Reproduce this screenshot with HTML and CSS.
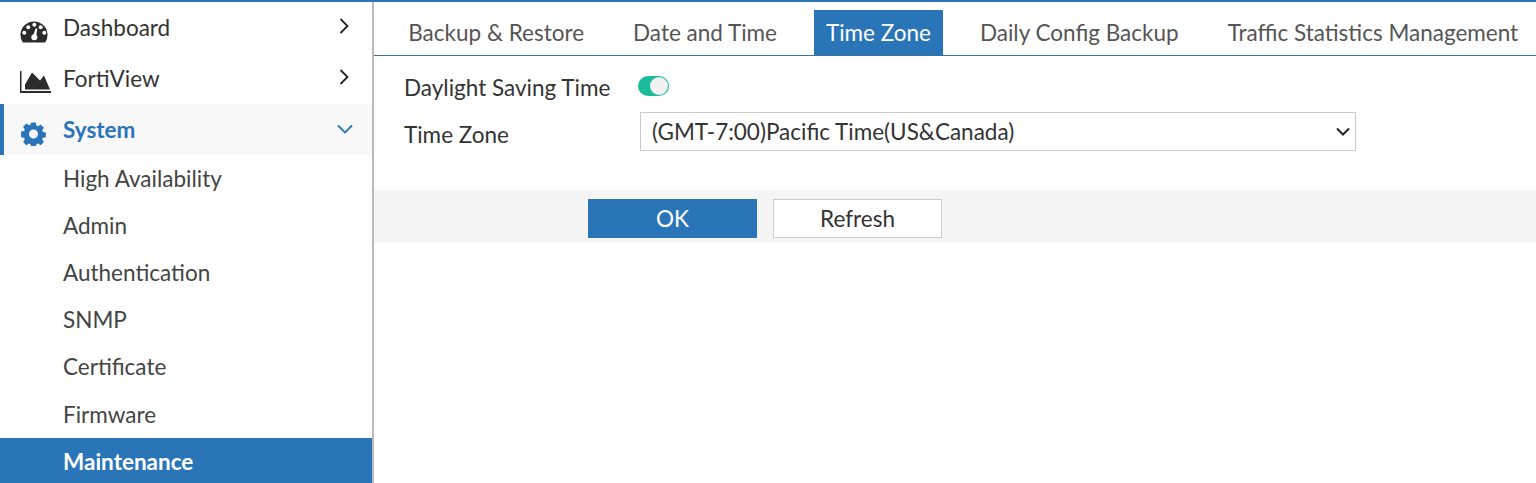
FILE: index.html
```html
<!DOCTYPE html>
<html lang="en">
<head>
  <meta charset="UTF-8">
  <title>Maintenance</title>
  <link rel="stylesheet" href="styles.css">
</head>
<body>
  <div class="container">
    <div class="sidebar">
      <a class="menu-item" href="#">
        <svg class="menu-icon" viewBox="0 0 32 24">
          <path fill="#2b2b2b" d="M2.800 22.500A13.500 13.500 0 1 1 25.200 22.500z"/>
          <g fill="#fff">
            <circle cx="4.300" cy="12.800" r="2"/>
            <circle cx="8.300" cy="7.200" r="2"/>
            <circle cx="14.300" cy="4.800" r="2"/>
            <circle cx="20.700" cy="7.200" r="2"/>
            <circle cx="24.300" cy="12.800" r="2"/>
            <circle cx="14.300" cy="17.200" r="3"/>
            <path d="M15.800 8.300l1.500.4-1.300 8.500-3.200-.6z"/>
          </g>
        </svg>
        <span class="menu-label">Dashboard</span>
        <svg class="chevron" viewBox="0 0 10 16"><path d="M1.500 1l7 7-7 7" fill="none" stroke="#222" stroke-width="1.800"/></svg>
      </a>
      <a class="menu-item" href="#">
        <svg class="menu-icon" viewBox="0 0 32 24"><path fill="#2b2b2b" d="M0 0h1.500v20H31v2H0zM5 18.500v-5L12 1.500 20 9.500 24 4.500l6 14z"/></svg>
        <span class="menu-label">FortiView</span>
        <svg class="chevron" viewBox="0 0 10 16"><path d="M1.500 1l7 7-7 7" fill="none" stroke="#222" stroke-width="1.800"/></svg>
      </a>
      <a class="menu-item open" href="#">
        <svg class="menu-icon" viewBox="0 0 32 24"><path fill="#2a74b8" fill-rule="evenodd" d="M11.200.500h4.600l.6 3 1.700.7 2.600-1.700 3.200 3.200-1.700 2.600.7 1.700 3 .6v4.600l-3 .6-.7 1.700 1.700 2.600-3.200 3.200-2.600-1.700-1.700.7-.6 3h-4.600l-.6-3-1.700-.7-2.600 1.700-3.200-3.200 1.700-2.600-.7-1.700-3-.6V9.600l3-.6.7-1.700-1.700-2.600 3.200-3.200 2.600 1.700 1.700-.7zM13.500 7.500a4.500 4.500 0 1 0 0 9 4.500 4.500 0 0 0 0-9z"/></svg>
        <span class="menu-label">System</span>
        <svg class="chevron down" viewBox="0 0 16 10"><path d="M1 1.500l7 7 7-7" fill="none" stroke="#2a74b8" stroke-width="1.800"/></svg>
      </a>
      <a class="sub-item" href="#">High Availability</a>
      <a class="sub-item" href="#">Admin</a>
      <a class="sub-item" href="#">Authentication</a>
      <a class="sub-item" href="#">SNMP</a>
      <a class="sub-item" href="#">Certificate</a>
      <a class="sub-item" href="#">Firmware</a>
      <a class="sub-item active" href="#">Maintenance</a>
    </div>

    <div class="main">
      <div class="tabs">
        <a class="tab" href="#">Backup &amp; Restore</a>
        <a class="tab" href="#">Date and Time</a>
        <a class="tab active" href="#">Time Zone</a>
        <a class="tab" href="#">Daily Config Backup</a>
        <a class="tab" href="#">Traffic Statistics Management</a>
      </div>

      <div class="form">
        <div class="form-row toggle-row">
          <label class="form-label">Daylight Saving Time</label>
          <span class="toggle"><span class="toggle-knob"></span></span>
        </div>
        <div class="form-row select-row">
          <label class="form-label">Time Zone</label>
          <select class="form-select">
            <option>(GMT-7:00)Pacific Time(US&amp;Canada)</option>
          </select>
        </div>
      </div>

      <div class="button-bar">
        <button class="btn btn-primary">OK</button>
        <button class="btn">Refresh</button>
      </div>
    </div>
  </div>
</body>
</html>
```

FILE: styles.css
```css
* {
  margin: 0;
  padding: 0;
  box-sizing: border-box;
}
html, body {
  height: 100%;
  font-family: 'Lato', sans-serif;
  font-size: 22.5px;
  color: #333;
  overflow: hidden;
}
a {
  text-decoration: none;
}
.container {
  display: flex;
  height: 100vh;
  border-top: 2px solid #2a74b8;
}
.sidebar {
  width: 374px;
  flex-shrink: 0;
  border-right: 2px solid #bbb;
  overflow: hidden;
}
.menu-item {
  display: flex;
  align-items: center;
  height: 51px;
  padding-left: 20px;
  padding-right: 20px;
  color: #333;
}
.menu-icon {
  width: 32px;
  height: 24px;
  margin-top: 8px;
  flex-shrink: 0;
}
.menu-label {
  margin-left: 11px;
  flex-grow: 1;
}
.chevron {
  width: 10px;
  height: 16px;
  margin-right: 3px;
  margin-bottom: 4px;
}
.chevron.down {
  width: 16px;
  height: 10px;
  margin-right: -1px;
  margin-bottom: 1px;
}
.menu-item.open {
  background-color: #f8f8f8;
  border-left: 4px solid #2a74b8;
  padding-left: 16px;
  color: #2a74b8;
  font-weight: 700;
}
.sub-item {
  display: flex;
  align-items: center;
  height: 47.2px;
  padding-left: 63px;
  padding-bottom: 1px;
  color: #444;
}
.sub-item.active {
  background-color: #2a74b8;
  color: white;
  font-weight: 700;
}
.main {
  flex-grow: 1;
  min-width: 0;
}
.tabs {
  display: flex;
  gap: 25.500px;
  height: 54px;
  padding-top: 8px;
  padding-left: 22.500px;
  border-bottom: 1px solid #3a6f9e;
}
.tab {
  display: flex;
  align-items: center;
  padding: 0 11.750px;
  color: #555;
  white-space: nowrap;
}
.tab.active {
  background-color: #2a74b8;
  color: white;
}
.form {
  padding: 0 0 39px 30px;
}
.form-row {
  display: flex;
  align-items: center;
}
.toggle-row {
  height: 56px;
}
.select-row {
  height: 39px;
}
.form-label {
  width: 234px;
  flex-shrink: 0;
}
.toggle-row .form-label {
  padding-top: 6px;
}
.select-row .form-label {
  width: 236px;
  padding-top: 5px;
}
.toggle {
  display: block;
  width: 31px;
  height: 20px;
  margin-top: 3px;
  border-radius: 10px;
  background-color: #1abc9c;
  position: relative;
}
.toggle-knob {
  position: absolute;
  top: 1px;
  right: 1px;
  width: 18px;
  height: 18px;
  border-radius: 50%;
  background-color: #f1f1f1;
}
.form-select {
  width: 716px;
  height: 39px;
  padding-left: 11px;
  border: 1px solid #ccc;
  background: white url("data:image/svg+xml,%3Csvg xmlns='http://www.w3.org/2000/svg' viewBox='0 0 14 9'%3E%3Cpath d='M1 1.500l6 6 6-6' fill='none' stroke='%23222' stroke-width='2'/%3E%3C/svg%3E") no-repeat right 5px center / 14px 9px;
  appearance: none;
  font-family: 'Lato', sans-serif;
  font-size: 22.5px;
  color: #333;
}
.button-bar {
  display: flex;
  gap: 16px;
  height: 53px;
  padding: 9px 0 5px 214px;
  background-color: #f5f5f5;
}
.btn {
  width: 169px;
  height: 39px;
  border: 1px solid #ccc;
  background-color: white;
  font-family: 'Lato', sans-serif;
  font-size: 22.5px;
  color: #333;
}
.btn-primary {
  border: none;
  background-color: #2a74b8;
  color: white;
}
```
